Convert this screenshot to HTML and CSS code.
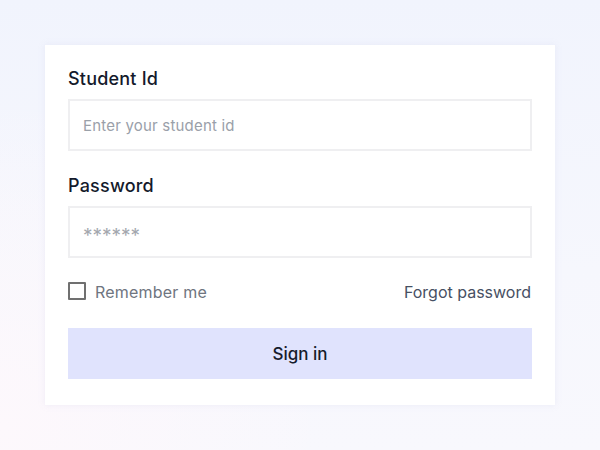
FILE: index.html
```html
<!DOCTYPE html>
<html lang="en">
<head>
    <meta charset="UTF-8">
    <meta name="viewport" content="width=device-width, initial-scale=1.0">
    <title>Student Login</title>
    <link rel="stylesheet" href="styles.css">
</head>
<body>
    <div class="page">
        <form class="login-card">
            <label class="field-label" for="studentId">Student Id</label>
            <input class="field-input" type="text" id="studentId" placeholder="Enter your student id">

            <label class="field-label second" for="password">Password</label>
            <input class="field-input pass-input" type="password" id="password" placeholder="******">

            <div class="options-row">
                <label class="remember">
                    <span class="check-box"></span>
                    Remember me
                </label>
                <a href="#" class="forgot-link">Forgot password</a>
            </div>

            <button type="button" class="signin-btn">Sign in</button>
        </form>
    </div>
</body>
</html>
```

FILE: styles.css
```css
* {
    margin: 0;
    padding: 0;
    box-sizing: border-box;
    font-family: Inter, "Noto Sans", sans-serif;
}
body {
    width: 600px;
    height: 450px;
    overflow: hidden;
    background:
        radial-gradient(circle at 0% 95%, #fdf8fc 0%, rgba(253, 248, 252, 0) 45%),
        linear-gradient(180deg, #f1f4fd 0%, #f6f7fd 60%, #f8f8fd 100%);
}
.page {
    height: 100%;
    display: flex;
    align-items: center;
    justify-content: center;
}
.login-card {
    width: 510px;
    height: 360px;
    background: #fff;
    padding: 22px 23px 26px;
    display: flex;
    flex-direction: column;
    box-shadow: 0 0 6px rgba(200, 205, 230, 0.25);
}
.field-label {
    font-size: 18px;
    line-height: 24px;
    letter-spacing: 0.2px;
    color: #141a2b;
    font-weight: 500;
    margin-bottom: 8px;
}
.field-label.second {
    margin-top: 23px;
}
.field-input {
    height: 52px;
    width: 100%;
    border: 2px solid #efeff1;
    padding: 0 13px;
    font-size: 15px;
    letter-spacing: 0.2px;
    color: #333;
    outline: none;
    background: #fff;
}
.field-input::placeholder {
    color: #9aa0a9;
}
.pass-input {
    padding-top: 8px;
}
.pass-input::placeholder {
    font-size: 19px;
    letter-spacing: 0;
    color: #a3a7ae;
}
.options-row {
    margin-top: 24px;
    height: 20px;
    display: flex;
    align-items: center;
    justify-content: space-between;
}
.remember {
    display: flex;
    align-items: center;
    gap: 9px;
    font-size: 16px;
    letter-spacing: 0.2px;
    color: #6f7580;
}
.check-box {
    width: 18px;
    height: 18px;
    border: 2px solid #707070;
    border-radius: 1px;
    margin-top: -2px;
}
.forgot-link {
    font-size: 16px;
    color: #475063;
    text-decoration: none;
    margin-right: 1px;
}
.signin-btn {
    margin-top: 26px;
    height: 51px;
    width: 100%;
    border: none;
    background: #e0e3fd;
    color: #161b2b;
    font-size: 17px;
    font-weight: 500;
    cursor: pointer;
}
```
